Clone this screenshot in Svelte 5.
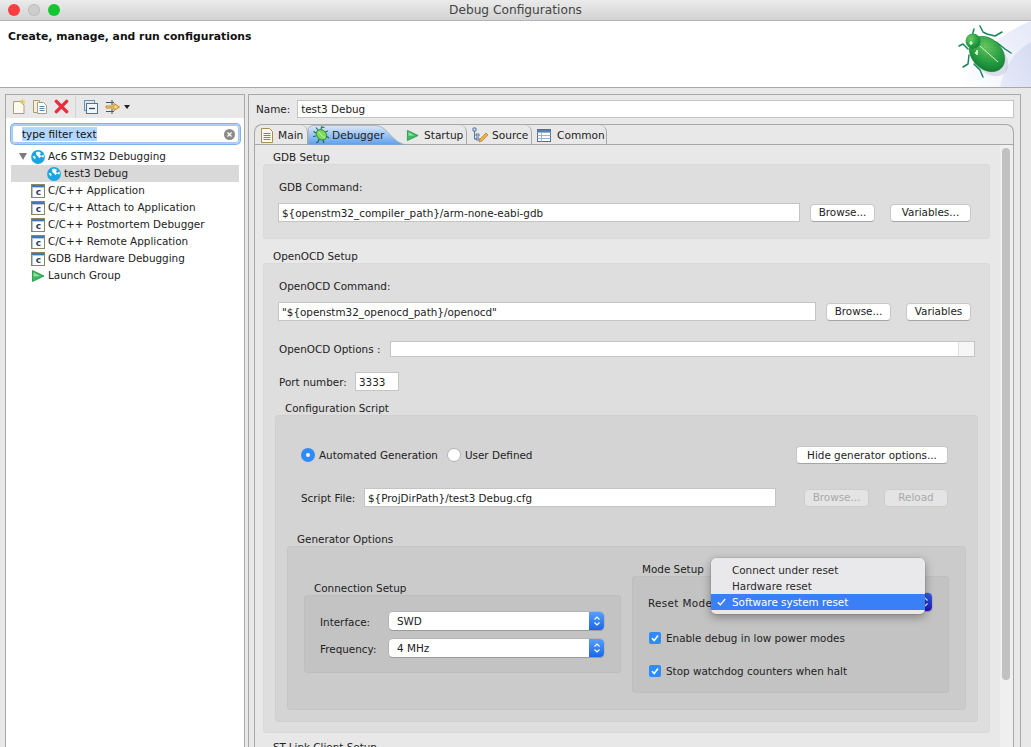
<script>
  const tree = [
    'C/C++ Application',
    'C/C++ Attach to Application',
    'C/C++ Postmortem Debugger',
    'C/C++ Remote Application',
    'GDB Hardware Debugging'
  ];
  const gdbPath = '${openstm32_compiler_path}/arm-none-eabi-gdb';
  const ocdPath = '"${openstm32_openocd_path}/openocd"';
  const scriptPath = '${ProjDirPath}/test3 Debug.cfg';
</script>

{#snippet globe()}
  <svg class="ico" viewBox="0 0 14 14" width="14" height="14">
    <circle cx="7" cy="7" r="6.9" fill="#19a5e4" />
    <path d="M5 2.200c1.700-.8 3.800-.4 5 .8L8.800 4.800l1.600 1.200 2.200-1.400c.3 1 .2 2-.2 3L10 6.600 8.300 8.200 7.200 6.400 5.400 5.200z" fill="#fff" />
    <path d="M1.400 6.600l2.200-.8 1.200 2L3.800 9.600z" fill="#d7f1fc" />
  </svg>
{/snippet}

{#snippet cfile()}
  <svg class="ico" viewBox="0 0 14 14" width="14" height="14">
    <rect x=".5" y=".5" width="13" height="13" fill="#fff" stroke="#8c8560" />
    <rect x="1" y="1" width="12" height="2.4" fill="#3f79b5" />
    <rect x="1" y="3.4" width="1" height="9.6" fill="#a9c4e0" />
    <text x="7.4" y="11.2" class="cletter">c</text>
  </svg>
{/snippet}

{#snippet play(w, h)}
  <svg class="ico" viewBox="0 0 14 14" width={w} height={h}>
    <path d="M1.500 1.500L13 7 1.500 12.500z" fill="#3fbb5e" stroke="#1d8f43" stroke-width=".8" />
    <path d="M2.600 3.400L9 7 2.600 7.400z" fill="#8fe3a4" />
  </svg>
{/snippet}

{#snippet smallbug()}
  <svg class="ico" viewBox="0 0 18 18" width="18" height="18">
    <g stroke="#1a6b3a" stroke-width="1.1" fill="none">
      <path d="M6 4L4 1.500M9 3.500l.5-2.500 3 .5M13 6l3-1M14 10l3 2M11 14l1 3M7 13l-1 3-2 .5M4 10l-3 .5M4 7L1.500 5.500" />
    </g>
    <ellipse cx="9.5" cy="8.8" rx="5.8" ry="4.6" transform="rotate(45 9.5 8.8)" fill="#7ed957" stroke="#1d7a3c" stroke-width=".8" />
    <path d="M6.500 6l6 6" stroke="#e6ffd9" stroke-width=".8" />
  </svg>
{/snippet}

{#snippet stepperArrows()}
  <svg viewBox="0 0 8 12" width="8" height="12"><path d="M1.500 4.500L4 2l2.500 2.500M1.500 7.500L4 10l2.500-2.500" fill="none" stroke="#fff" stroke-width="1.200" /></svg>
{/snippet}

{#snippet tick()}
  <span class="tick"><svg viewBox="0 0 12 12" width="12" height="12"><path d="M3 6.200l2.200 2.300L9 3.500" fill="none" stroke="#fff" stroke-width="1.600" /></svg></span>
{/snippet}

<div class="window">
  <div class="titlebar">
    <span class="light red"></span>
    <span class="light grey"></span>
    <span class="light green"></span>
    <span class="title">Debug Configurations</span>
  </div>

  <header class="banner">
    <strong>Create, manage, and run configurations</strong>
    <svg class="logo" viewBox="0 0 80 66" width="80" height="66">
      <defs>
        <radialGradient id="shell" cx="35%" cy="35%" r="75%">
          <stop offset="0" stop-color="#6ccb62" />
          <stop offset=".6" stop-color="#28a042" />
          <stop offset="1" stop-color="#0e7a33" />
        </radialGradient>
        <pattern id="dots" width="2" height="2" patternUnits="userSpaceOnUse">
          <rect x="0" y="0" width=".8" height=".8" fill="#0b6a2c" opacity=".45" />
        </pattern>
        <linearGradient id="sw1" x1="0" y1="1" x2="1" y2="0">
          <stop offset="0" stop-color="#fff" />
          <stop offset="1" stop-color="#e4e8f8" />
        </linearGradient>
        <linearGradient id="sw2" x1="0" y1="1" x2="1" y2="0">
          <stop offset="0" stop-color="#e6e9f8" />
          <stop offset="1" stop-color="#d6dcf2" />
        </linearGradient>
      </defs>
      <path d="M9 66C22 36 50 12 80 0v66z" fill="url(#sw1)" />
      <path d="M49 66C54 44 64 30 80 21v45z" fill="url(#sw2)" />
      <ellipse cx="39" cy="37" rx="21" ry="15" transform="rotate(45 39 37)" fill="#8c93a8" opacity=".25" />
      <g stroke="#17855a" stroke-width="1.500" fill="none" stroke-linecap="round" stroke-linejoin="round">
        <path d="M21 15l2-7" />
        <path d="M32 11l-3-6M32 11l4 2 8 2 7-4" />
        <path d="M45 21l4 3 5 4 6 4" />
        <path d="M17 28l-5-5-4 2" />
        <path d="M18 34l-1 9-5 3" />
        <path d="M23 43l6 6 3 7" />
      </g>
      <ellipse cx="36" cy="33" rx="20" ry="15" transform="rotate(45 36 33)" fill="url(#shell)" stroke="#12823a" stroke-width=".6" />
      <ellipse cx="36" cy="33" rx="20" ry="15" transform="rotate(45 36 33)" fill="url(#dots)" />
      <circle cx="22" cy="20" r="7.500" fill="url(#shell)" />
      <path d="M29 25l18 16" stroke="#d9f7d2" stroke-width="1" />
      <path d="M24 32l3-1M26 29v5" stroke="#e8ffe4" stroke-width="1.400" />
      <path d="M18 22h4M20 20v4" stroke="#e8ffe4" stroke-width="1.200" />
    </svg>
  </header>

  <div class="panes">
    <aside class="left">
      <div class="toolbar">
        <svg viewBox="0 0 16 16" width="16" height="16">
          <path d="M2.500 2.500h7l3.500 3.500v8.500h-10.500z" fill="#fdfbf0" stroke="#a89f76" />
          <path d="M11.500 .5v5M9 3h5M9.700 1.200l3.600 3.600M13.300 1.200L9.700 4.800" stroke="#e9c04a" stroke-width="1" />
        </svg>
        <svg viewBox="0 0 16 16" width="16" height="16">
          <path d="M1.500 1.500h6v12h-6z" fill="#f3efdc" stroke="#a89f76" />
          <path d="M5.500 3.500h6l3 3v8h-9z" fill="#fff" stroke="#a89f76" />
          <path d="M7.500 7.500h5M7.500 9.500h5M7.500 11.500h5" stroke="#5a86b8" />
        </svg>
        <svg class="del" viewBox="0 0 16 16" width="15" height="15">
          <path d="M2.500 2.500l11 11M13.500 2.500l-11 11" stroke="#ec2b3c" stroke-width="3.600" stroke-linecap="round" />
        </svg>
        <span class="sep"></span>
        <svg viewBox="0 0 16 16" width="16" height="16">
          <rect x="1.500" y="1.500" width="10" height="10" fill="#dce8f4" stroke="#6d8fae" />
          <rect x="3.500" y="4.500" width="11" height="10" fill="#f2f7fb" stroke="#4f7596" />
          <path d="M6 9.500h6" stroke="#26445f" stroke-width="1.300" />
        </svg>
        <svg class="filter" viewBox="0 0 18 16" width="18" height="16">
          <path d="M1 3.500h8M1 12.500h8M7 1v5M7 10v5" stroke="#3d5a73" />
          <path d="M1 7h8V4.500L14.500 8 9 11.500V9H1z" fill="#f4d27c" stroke="#c58b1e" />
        </svg>
        <svg class="caret" viewBox="0 0 6 4" width="6" height="4"><path d="M0 0h6L3 4z" fill="#222" /></svg>
      </div>

      <div class="filterbox">
        <span class="filtertext">type filter text</span>
        <svg viewBox="0 0 12 12" width="11" height="11">
          <circle cx="6" cy="6" r="6" fill="#8a8a8a" />
          <path d="M3.800 3.800l4.400 4.400M8.200 3.800L3.800 8.200" stroke="#fff" stroke-width="1.300" />
        </svg>
      </div>

      <ul class="tree">
        <li class="row">
          <svg class="twist" viewBox="0 0 8 7" width="8" height="7"><path d="M0 0h8L4 7z" fill="#7c7c7c" /></svg>
          {@render globe()}
          <span>Ac6 STM32 Debugging</span>
        </li>
        <li class="row sel">
          {@render globe()}
          <span>test3 Debug</span>
        </li>
        {#each tree as item}
          <li class="row">
            {@render cfile()}
            <span>{item}</span>
          </li>
        {/each}
        <li class="row">
          {@render play(14, 14)}
          <span>Launch Group</span>
        </li>
      </ul>
    </aside>

    <section class="right">
      <div class="namerow">
        <span>Name:</span>
        <div class="field grow">test3 Debug</div>
      </div>

      <div class="folder">
        <div class="tabs">
          <div class="tab t-main">
            <svg class="ico" viewBox="0 0 12 15" width="12" height="15">
              <path d="M.5.500h8l3 3v11H.5z" fill="#fdfbf0" stroke="#a58d55" />
              <path d="M2.500 5.500h7M2.500 7.500h7M2.500 9.500h7M2.500 11.500h7" stroke="#6b83a3" />
            </svg>
            <span>Main</span>
          </div>
          <div class="tab t-debug">
            <svg class="tabshape" viewBox="0 0 101 20" width="101" height="20">
              <defs>
                <linearGradient id="tabblue" x1="0" y1="0" x2="0" y2="1">
                  <stop offset="0" stop-color="#dbe8f9" />
                  <stop offset="1" stop-color="#5a9eee" />
                </linearGradient>
              </defs>
              <path d="M0 20V6Q0 .5 6 .5H68C80 .5 84 20 101 20z" fill="url(#tabblue)" stroke="#a8a8a8" stroke-width=".8" />
            </svg>
            {@render smallbug()}
            <span>Debugger</span>
          </div>
          <div class="tab t-start">
            {@render play(13, 13)}
            <span>Startup</span>
          </div>
          <div class="tab t-source">
            <svg class="ico" viewBox="0 0 16 16" width="16" height="16">
              <path d="M1 1h3v3H1zM4 7h3v2H4zM4 11h3v2H4zM2.500 4v8h2" fill="none" stroke="#4f78a6" />
              <path d="M7 15l1-3 6-6 2 2-6 6z" fill="#eeb04a" stroke="#b57a20" stroke-width=".7" />
            </svg>
            <span>Source</span>
          </div>
          <div class="tab t-common">
            <svg class="ico" viewBox="0 0 14 13" width="14" height="13">
              <rect x=".5" y=".5" width="13" height="12" fill="#fff" stroke="#4f6f93" />
              <path d="M.5 3.500h13M.5 6.500h13M.5 9.500h13M4.500 3.500v9" stroke="#9db4cc" />
              <path d="M1 2h12" stroke="#5b7fa6" stroke-width="2" />
            </svg>
            <span>Common</span>
          </div>
        </div>

        <div class="scrollarea">
          <div class="form">
            <h4>GDB Setup</h4>
            <div class="box b1 gdb">
              <div class="cap">GDB Command:</div>
              <div class="line">
                <div class="field tall grow">{gdbPath}</div>
                <button class="browse">Browse...</button>
                <button class="vars">Variables...</button>
              </div>
            </div>

            <h4 class="next">OpenOCD Setup</h4>
            <div class="box b1 ocd">
              <div class="inset">
                <div class="cap">OpenOCD Command:</div>
                <div class="line">
                  <div class="field tall grow">{ocdPath}</div>
                  <button class="browse">Browse...</button>
                  <button class="vars short">Variables</button>
                </div>
                <div class="line options">
                  <span class="optlabel">OpenOCD Options :</span>
                  <div class="field multi grow"><span class="corner"></span></div>
                </div>
                <div class="line port">
                  <span class="portlabel">Port number:</span>
                  <div class="field tall portnum">3333</div>
                </div>
              </div>

              <h4 class="sub">Configuration Script</h4>
              <div class="box b2 script">
                <div class="line radios">
                  <span class="radio on"></span><span class="radiotext">Automated Generation</span>
                  <span class="radio"></span><span class="radiotext">User Defined</span>
                  <button class="hide">Hide generator options...</button>
                </div>
                <div class="line scriptfile">
                  <span class="sflabel">Script File:</span>
                  <div class="field tall sfinput">{scriptPath}</div>
                  <button class="browse off" disabled>Browse...</button>
                  <button class="reload off" disabled>Reload</button>
                </div>

                <h4 class="sub gen">Generator Options</h4>
                <div class="box b3 generator">
                  <div class="col conn">
                    <h4>Connection Setup</h4>
                    <div class="box b4 connbox">
                      <div class="selrow">
                        <span class="sellabel">Interface:</span>
                        <div class="select"><span>SWD</span><i class="stepper">{@render stepperArrows()}</i></div>
                      </div>
                      <div class="selrow">
                        <span class="sellabel">Frequency:</span>
                        <div class="select"><span>4 MHz</span><i class="stepper">{@render stepperArrows()}</i></div>
                      </div>
                    </div>
                  </div>

                  <div class="col mode">
                    <h4>Mode Setup</h4>
                    <div class="box b4 modebox">
                      <div class="selrow">
                        <span class="sellabel">Reset Mode:</span>
                        <div class="select"><span></span><i class="stepper deep">{@render stepperArrows()}</i></div>
                      </div>
                      <div class="check first">
                        {@render tick()}
                        Enable debug in low power modes
                      </div>
                      <div class="check">
                        {@render tick()}
                        Stop watchdog counters when halt
                      </div>

                      <div class="popup">
                        <div class="opt">Connect under reset</div>
                        <div class="opt">Hardware reset</div>
                        <div class="opt picked">
                          <svg viewBox="0 0 9 8" width="9" height="8"><path d="M.8 4.200L3.300 6.800 8.200 1" fill="none" stroke="#fff" stroke-width="1.300" /></svg>
                          Software system reset
                        </div>
                      </div>
                    </div>
                  </div>
                </div>
              </div>
            </div>

            <h4 class="next last">ST-Link Client Setup</h4>
          </div>
          <div class="vscroll"><span class="thumb"></span></div>
        </div>
      </div>
    </section>
  </div>
</div>

<style>
  :global(body) {
    margin: 0;
    background: #e8e8e8;
  }

  .window {
    width: 1031px;
    height: 747px;
    overflow: hidden;
    display: flex;
    flex-direction: column;
    background: #e8e8e8;
    color: #222;
    font-family: "DejaVu Sans", sans-serif;
    font-size: 10.4px;
  }

  .titlebar {
    position: relative;
    flex: none;
    height: 21px;
    box-sizing: border-box;
    display: flex;
    align-items: center;
    gap: 8px;
    padding-left: 8px;
    background: linear-gradient(#ebebeb, #d2d2d2);
    border-bottom: 1px solid #b4b4b4;
  }

  .light {
    width: 12px;
    height: 12px;
    border-radius: 50%;
  }
  .red { background: #fc3d3f; }
  .grey { background: #cdcdcd; box-shadow: inset 0 0 0 1px #bdbdbd; }
  .green { background: #14c62f; }

  .title {
    position: absolute;
    left: 0;
    right: 0;
    top: 3px;
    text-align: center;
    font-size: 12.2px;
    line-height: 15px;
    color: #444;
  }

  .banner {
    position: relative;
    flex: none;
    height: 67px;
    box-sizing: border-box;
    padding: 9px 8px 0;
    background: #fff;
    border-bottom: 1px solid #a8a8a8;
  }
  .banner strong {
    font-size: 10.8px;
    line-height: 14px;
    color: #111;
  }
  .logo {
    position: absolute;
    right: 0;
    top: 0;
  }

  .panes {
    flex: 1;
    min-height: 0;
    display: flex;
    gap: 3px;
    padding: 6px 10px 0 5px;
  }

  .left {
    width: 240px;
    box-sizing: border-box;
    border: 1px solid #a8a8a8;
    border-bottom: none;
    background: #fff;
    display: flex;
    flex-direction: column;
  }

  .toolbar {
    height: 23px;
    box-sizing: border-box;
    display: flex;
    align-items: center;
    padding-left: 5px;
    gap: 5px;
    background: #e8e8e8;
  }
  .toolbar .del { margin-left: 1px; }
  .toolbar .sep {
    width: 1px;
    height: 22px;
    margin: 0 2px 0 1px;
    background: #d2d2d2;
  }
  .toolbar .filter { margin-left: 1px; }
  .toolbar .caret { margin-left: -4px; }

  .filterbox {
    margin: 6px 4px 0 5px;
    height: 20px;
    box-sizing: border-box;
    display: flex;
    align-items: center;
    justify-content: space-between;
    padding: 0 4px 0 10px;
    background: #fff;
    border: 1px solid #b9cfe9;
    border-radius: 4px;
    box-shadow: 0 0 0 1px #7fb3ee, inset 0 0 0 1px #a5c9f2;
    line-height: 14px;
  }
  .filtertext {
    background: #b3d7ff;
    color: #111;
  }

  .tree {
    list-style: none;
    margin: 4px 0 0;
    padding: 0;
  }
  .row {
    height: 17px;
    box-sizing: border-box;
    margin: 0 5px;
    padding-left: 20px;
    display: flex;
    align-items: center;
    gap: 3px;
    line-height: 14px;
    white-space: nowrap;
  }
  .row span { padding-bottom: 2px; }
  .row .twist {
    margin-left: -12px;
    margin-right: 1px;
  }
  .row.sel {
    background: #d9d9d9;
    padding-left: 36px;
  }
  .ico { flex: none; }
  .cletter {
    font-family: "DejaVu Sans", sans-serif;
    font-size: 9px;
    font-weight: 700;
    fill: #24405f;
    text-anchor: middle;
  }

  .right {
    flex: 1;
    min-width: 0;
    box-sizing: border-box;
    border: 1px solid #a8a8a8;
    border-bottom: none;
    padding: 5px 6px 0 5px;
    display: flex;
    flex-direction: column;
  }

  .namerow {
    flex: none;
    display: flex;
    align-items: center;
    gap: 7px;
    padding-left: 2px;
    margin-bottom: 6px;
  }

  .field {
    height: 18px;
    box-sizing: border-box;
    border: 1px solid #c4c4c4;
    background: #fff;
    padding: 0 3px;
    line-height: 16px;
    white-space: nowrap;
    color: #222;
  }
  .field.tall {
    height: 19px;
    line-height: 18px;
  }
  .grow {
    flex: 1;
    min-width: 0;
  }

  .folder {
    flex: 1;
    min-height: 0;
    display: flex;
    flex-direction: column;
    border: 1px solid #a8a8a8;
    border-bottom: none;
    border-radius: 8px 8px 0 0;
  }

  .tabs {
    flex: none;
    height: 20px;
    box-sizing: border-box;
    display: flex;
    border-bottom: 1px solid #a8a8a8;
  }
  .tab {
    position: relative;
    box-sizing: border-box;
    height: 19px;
    display: flex;
    align-items: center;
    white-space: nowrap;
    font-size: 10.6px;
    padding-top: 1px;
    border-right: 1px solid #a8a8a8;
    border-top-right-radius: 7px;
  }
  .tab span,
  .tab :global(svg.ico) { position: relative; }
  .t-main { width: 53px; padding-left: 6px; gap: 5px; }
  .t-debug { width: 98px; padding-left: 4px; gap: 2px; border-right: none; }
  .t-start { width: 61px; padding-left: 0; gap: 5px; }
  .t-source { width: 65px; padding-left: 5px; gap: 4px; }
  .t-common { width: 75px; padding-left: 5px; gap: 6px; }
  .tabshape {
    position: absolute;
    left: 0;
    top: 0;
  }

  .scrollarea {
    flex: 1;
    min-height: 0;
    display: flex;
    overflow: hidden;
  }
  .form {
    flex: 1;
    min-width: 0;
    padding: 5px 10px 0 8px;
  }
  .vscroll {
    flex: none;
    width: 13px;
    box-sizing: border-box;
    padding: 3px 3px 0 2px;
    background: #efefef;
  }
  .thumb {
    display: block;
    height: 532px;
    border-radius: 4px;
    background: #c1c1c1;
  }

  h4 {
    margin: 0 0 0 10px;
    padding-top: 1px;
    font-weight: 400;
    font-size: 10.4px;
    line-height: 13px;
    color: #222;
  }
  h4.next { margin-top: 10px; }
  h4.last { margin-top: 8px; padding-top: 0; }
  h4.sub { margin-top: 10px; }
  h4.gen { margin-top: 25px; }

  .box {
    box-sizing: border-box;
    border-radius: 4px;
  }
  .b1 { background: #dedede; box-shadow: inset 0 0 0 1px #dadada; }
  .b2 { background: #d4d4d4; box-shadow: inset 0 0 0 1px #cfcfcf; }
  .b3 { background: #cbcbcb; box-shadow: inset 0 0 0 1px #c6c6c6; }
  .b4 { background: #c3c3c3; box-shadow: inset 0 0 0 1px #bebebe; }

  .cap {
    padding-top: 1px;
    line-height: 13px;
    margin: 0 0 9px 1px;
  }
  .line {
    display: flex;
    align-items: center;
  }

  .gdb {
    height: 75px;
    padding: 16px 19px 0 15px;
  }

  .ocd {
    padding: 16px 12px 11px;
  }
  .inset { padding: 0 7px 0 3px; }
  .options { margin-top: 20px; }
  .optlabel {
    width: 111px;
    margin-left: 1px;
    flex: none;
  }
  .multi {
    height: 16px;
    margin-right: -4px;
    padding: 0;
    display: flex;
    justify-content: flex-end;
  }
  .corner {
    width: 15px;
    background: #f6f6f6;
    border-left: 1px solid #e2e2e2;
  }
  .port { margin-top: 15px; }
  .portlabel {
    width: 76px;
    margin-left: 1px;
    flex: none;
  }
  .portnum { width: 44px; flex: none; }

  button {
    flex: none;
    height: 18px;
    box-sizing: border-box;
    padding: 0 0 1px;
    background: #fff;
    border: 1px solid #c8c8c8;
    border-bottom-color: #a6a6a6;
    border-radius: 4px;
    font: inherit;
    color: #222;
  }
  button.browse { width: 65px; margin-left: 10px; }
  button.vars { width: 81px; margin-left: 15px; }
  button.vars.short { width: 65px; }
  button.off {
    background: #e4e4e4;
    color: #a9a9a9;
    border-color: #cdcdcd;
  }
  button.reload { width: 64px; margin-left: 15px; }
  button.hide {
    width: 152px;
    margin-left: auto;
  }

  .script {
    height: 307px;
    padding: 31px 30px 0 12px;
  }
  .radios {
    height: 18px;
    padding-left: 14px;
  }
  .radio {
    width: 14px;
    height: 14px;
    flex: none;
    box-sizing: border-box;
    border-radius: 50%;
    background: #fff;
    border: 1px solid #b4b4b4;
  }
  .radio.on {
    border: 5px solid #2f8bfb;
  }
  .radiotext { margin: 0 9px 0 4px; }

  .scriptfile {
    margin-top: 24px;
    padding-left: 14px;
  }
  .sflabel { width: 63px; flex: none; }
  .sfinput { width: 412px; flex: none; }
  .scriptfile button.browse { margin-left: 28px; }

  .generator {
    height: 164px;
    margin-right: -18px;
    padding: 0 17px;
    display: flex;
    gap: 11px;
  }
  .col { flex: 1; min-width: 0; }
  .conn { padding-top: 35px; }
  .mode { padding-top: 16px; }

  .connbox {
    height: 78px;
    padding: 17px 17px 0 16px;
    display: flex;
    flex-direction: column;
    gap: 9px;
  }
  .modebox {
    position: relative;
    height: 117px;
    padding: 17px 17px 0 16px;
  }
  .modebox .sellabel { letter-spacing: .35px; }

  .selrow {
    display: flex;
    align-items: center;
  }
  .sellabel {
    width: 69px;
    flex: none;
    padding-top: 2px;
  }

  .select {
    flex: 1;
    min-width: 0;
    height: 18px;
    display: flex;
    align-items: center;
    justify-content: space-between;
    padding-left: 8px;
    background: #fff;
    border-radius: 4px;
    box-shadow: 0 0 0 .5px #a8a8a8, 0 1px 0 #8e8e8e;
  }
  .stepper {
    width: 15px;
    height: 18px;
    display: flex;
    align-items: center;
    justify-content: center;
    background: linear-gradient(#5a9dfc, #1768e8);
    border-radius: 0 4px 4px 0;
  }
  .stepper.deep { background: linear-gradient(#2b62e8, #2516bd); }

  .check {
    display: flex;
    align-items: center;
    gap: 5px;
    line-height: 14px;
    margin-top: 19px;
    margin-left: 1px;
  }
  .check.first { margin-top: 20px; }
  .tick {
    width: 12px;
    height: 12px;
    flex: none;
    display: block;
    border-radius: 2px;
    background: #2f8bfb;
  }
  .tick svg { display: block; }

  .popup {
    position: absolute;
    left: 79px;
    top: -18px;
    width: 214px;
    height: 56px;
    box-sizing: border-box;
    padding-top: 4px;
    background: #e9e9eb;
    border-radius: 5px;
    box-shadow: 0 3px 10px rgba(0, 0, 0, .35), 0 0 0 .5px rgba(0, 0, 0, .12);
    z-index: 2;
  }
  .opt {
    position: relative;
    height: 16px;
    line-height: 16px;
    padding-left: 21px;
    color: #2a2a2a;
  }
  .opt.picked {
    background: #3b7ff6;
    color: #fff;
  }
  .opt svg {
    position: absolute;
    left: 6px;
    top: 4px;
  }
</style>
